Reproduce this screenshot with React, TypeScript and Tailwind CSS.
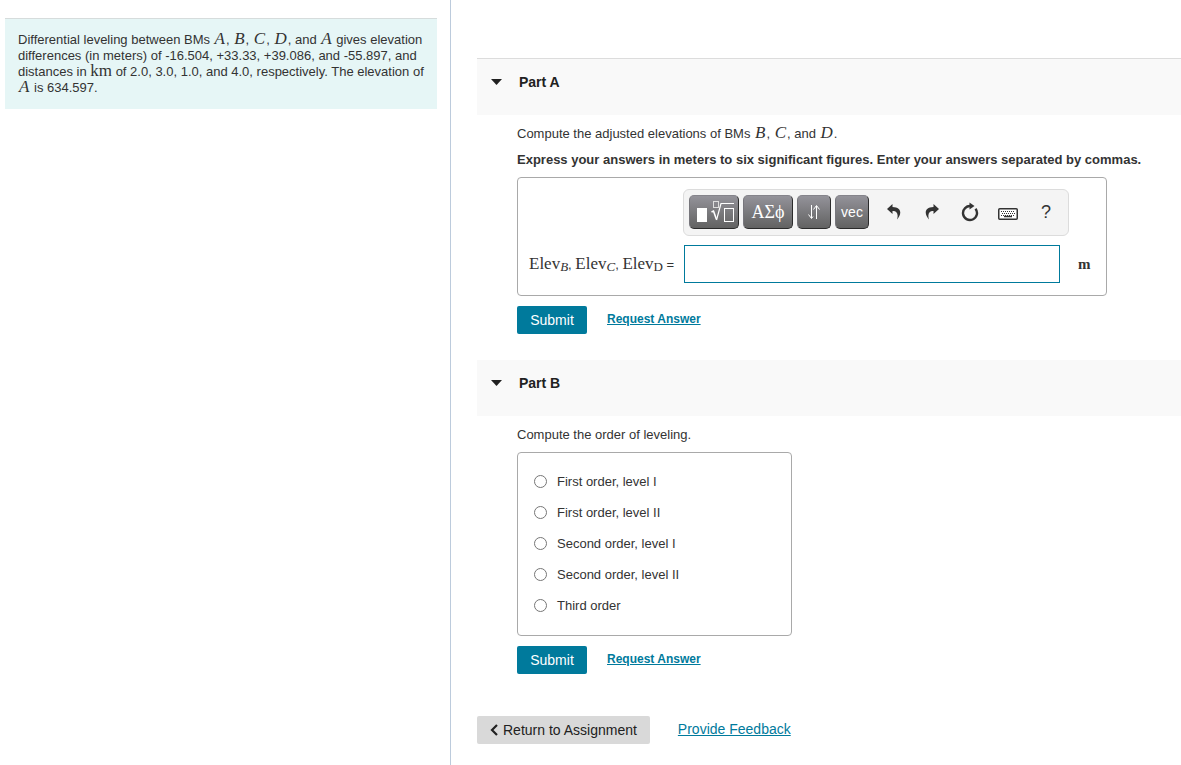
import { useState } from "react";
import type { ReactNode } from "react";

const levels = [
  "First order, level I",
  "First order, level II",
  "Second order, level I",
  "Second order, level II",
  "Third order",
];

function Var({ children }: { children: ReactNode }) {
  return (
    <i className="px-px font-['Liberation_Serif',serif] text-[17px] leading-[0px]">
      {children}
    </i>
  );
}

function Elev({ sub, upright }: { sub: string; upright?: boolean }) {
  return (
    <span className="font-['Liberation_Serif',serif] text-[17px]">
      Elev
      <sub
        className={
          upright
            ? "bottom-[-2px] text-[13px]"
            : "bottom-[-2px] text-[13px] italic"
        }
      >
        {sub}
      </sub>
    </span>
  );
}

function PartHeader({
  title,
  first,
}: {
  title: string;
  first?: boolean;
}) {
  return (
    <button
      type="button"
      className={
        first
          ? "flex h-[57px] w-full items-start border-t border-[#dcdcdc] bg-[#f9f9f9] pt-[14px] pl-[14px] text-left"
          : "flex h-14 w-full items-start bg-[#f9f9f9] pt-[14px] pl-[14px] text-left"
      }
    >
      <svg width="11" height="6" viewBox="0 0 11 6" className="mt-[6px]">
        <path d="M0 0H11L5.5 6Z" fill="#212121" />
      </svg>
      <h2 className="ml-[17px] text-sm leading-[18px] font-bold text-[#212121]">
        {title}
      </h2>
    </button>
  );
}

function Actions() {
  return (
    <div className="mt-[10px] flex items-center gap-5">
      <button
        type="submit"
        className="h-7 w-[70px] rounded-[2px] bg-[#007a9c] text-sm text-white"
      >
        Submit
      </button>
      <a
        href="#answer"
        className="pb-[2px] text-xs leading-4 font-bold text-[#007a9c] underline"
      >
        Request Answer
      </a>
    </div>
  );
}

const darkButton =
  "flex h-[34px] items-center justify-center rounded-[5px] border border-t-[#85848b] border-r-[#2b2b2b] border-b-[#2b2b2b] border-l-[#77767c] bg-linear-to-b from-[#94939a] to-[#626262] text-white";

const iconButton = "flex h-[34px] w-[38px] items-center justify-center";

function Toolbar() {
  return (
    <div className="flex h-[47px] gap-1 rounded-[6px] border border-[#dcdcdc] bg-[#f4f4f4] py-[5px] pr-[3px] pl-[5px]">
      <button type="button" aria-label="Templates" className={`${darkButton} w-[50px]`}>
        <svg width="40" height="24" viewBox="0 0 40 24" fill="none">
          <rect x="3" y="8" width="10" height="14" fill="#fff" />
          <rect x="19.5" y="1.5" width="5" height="6" stroke="#ddd" />
          <path d="M17.5 12L19.5 11L22.5 19.5" stroke="#fff" strokeWidth="1.6" />
          <path d="M22.5 20L27 3.5H40" stroke="#fff" strokeWidth="1.2" />
          <rect x="30.5" y="8.5" width="9" height="13" stroke="#fff" />
        </svg>
      </button>
      <button
        type="button"
        className={`${darkButton} w-[50px] font-['Liberation_Serif',serif] text-lg`}
      >
        ΑΣϕ
      </button>
      <button type="button" aria-label="Arrows" className={`${darkButton} w-[34px]`}>
        <svg width="14" height="16" viewBox="0 0 14 16" fill="none" stroke="#fff">
          <path d="M4.5 1V14M1.5 10.5L4.5 14.5L6 12.5" />
          <path d="M9.5 15V2M6.5 5.5L9.5 1.5L12.5 5.5" />
        </svg>
      </button>
      <button type="button" className={`${darkButton} w-[34px] text-sm`}>
        vec
      </button>
      <div className="ml-[2px] flex">
        <button type="button" aria-label="Undo" className={iconButton}>
          <svg width="14" height="16" viewBox="0 0 14 16">
            <path
              d="M5.5 0L0 5L5.5 10V7C9 6.5 12 9 10 15.5C14.5 11 15.5 3.2 5.5 3Z"
              fill="#333"
            />
          </svg>
        </button>
        <button type="button" aria-label="Redo" className={iconButton}>
          <svg width="14" height="16" viewBox="0 0 14 16">
            <path
              d="M8.5 0L14 5L8.5 10V7C5 6.5 2 9 4 15.5C-0.5 11 -1.5 3.2 8.5 3Z"
              fill="#333"
            />
          </svg>
        </button>
        <button type="button" aria-label="Reset" className={iconButton}>
          <svg width="18" height="20" viewBox="0 0 18 20" fill="none">
            <path
              d="M10 4.1A7 7 0 1 0 14.5 6.7"
              stroke="#333"
              strokeWidth="2.4"
            />
            <path d="M8.5 0.5L13.5 4L8.5 7.5Z" fill="#333" />
          </svg>
        </button>
        <button type="button" aria-label="Keyboard" className={iconButton}>
          <svg width="20" height="12" viewBox="0 0 20 12" fill="none" className="mt-1">
            <rect
              x="0.75"
              y="0.75"
              width="18.5"
              height="10.5"
              rx="1"
              fill="#fff"
              stroke="#333"
              strokeWidth="1.5"
            />
            <path
              d="M3 3.5H17M4 5.5H17M3 7.5H17"
              stroke="#333"
              strokeWidth="1"
              strokeDasharray="1 1"
            />
            <path d="M6 8.5H14" stroke="#333" strokeWidth="1.5" />
          </svg>
        </button>
        <button
          type="button"
          aria-label="Help"
          className={`${iconButton} text-lg text-[#333]`}
        >
          ?
        </button>
      </div>
    </div>
  );
}

export default function App() {
  const [answer, setAnswer] = useState("");
  const [level, setLevel] = useState("");

  return (
    <div className="grid min-h-screen grid-cols-[451fr_730fr] bg-white font-['Liberation_Sans',Arial,sans-serif] text-[13px] leading-4 text-[#333]">

      <aside className="min-w-0 border-r border-[#bccbdc] pt-[18px] pr-[13px] pl-[5px]">
        <p className="border-t border-[#d6dcdc] bg-[#e6f6f6] pt-[13px] pr-2 pb-[13px] pl-[13px]">
          Differential leveling between BMs <Var>A</Var>, <Var>B</Var>,{" "}
          <Var>C</Var>, <Var>D</Var>, and <Var>A</Var> gives elevation
          differences (in meters) of -16.504, +33.33, +39.086, and -55.897, and
          distances in{" "}
          <span className="font-['Liberation_Serif',serif] text-[17px] leading-[0px]">
            km
          </span>{" "}
          of 2.0, 3.0, 1.0, and 4.0, respectively. The elevation of{" "}
          <Var>A</Var> is 634.597.
        </p>
      </aside>

      <main className="min-w-0 pt-[58px] pl-[26px]">

        <section>
          <PartHeader title="Part A" first />

          <form
            className="pt-[11px] pl-10"
            onSubmit={(e) => e.preventDefault()}
          >
            <p>
              Compute the adjusted elevations of BMs <Var>B</Var>, <Var>C</Var>
              , and <Var>D</Var>.
            </p>
            <p className="mt-[10px] font-bold">
              Express your answers in meters to six significant figures. Enter
              your answers separated by commas.
            </p>

            <div className="mt-[9px] w-fit rounded-[4px] border border-[#a9a9a9] pt-[11px] pr-[15px] pb-3 pl-[11px]">
              <div className="flex justify-end pr-[22px]">
                <Toolbar />
              </div>
              <div className="mt-[9px] flex items-center">
                <label htmlFor="elevations" className="w-[155px] whitespace-nowrap">
                  <Elev sub="B" />, <Elev sub="C" />, <Elev sub="D" upright /> =
                </label>
                <input
                  id="elevations"
                  type="text"
                  value={answer}
                  onChange={(e) => setAnswer(e.target.value)}
                  className="h-[38px] w-[376px] border border-[#007a9c] bg-white px-2 text-base outline-none"
                />
                <span className="ml-[18px] w-[13px] font-['Liberation_Serif',serif] text-[15px] font-bold">
                  m
                </span>
              </div>
            </div>

            <Actions />
          </form>
        </section>

        <section className="mt-[26px]">
          <PartHeader title="Part B" />

          <form
            className="pt-[11px] pl-10"
            onSubmit={(e) => e.preventDefault()}
          >
            <p>Compute the order of leveling.</p>

            <fieldset className="mt-[9px] flex w-[275px] flex-col gap-[14px] rounded-[4px] border border-[#a9a9a9] px-4 pt-5 pb-[21px]">
              {levels.map((name) => (
                <label
                  key={name}
                  className="flex items-center gap-[10px] leading-[17px]"
                >
                  <input
                    type="radio"
                    name="level"
                    value={name}
                    checked={level === name}
                    onChange={() => setLevel(name)}
                    className="size-[13px]"
                  />
                  {name}
                </label>
              ))}
            </fieldset>

            <Actions />
          </form>
        </section>

        <div className="mt-[42px] flex items-center gap-7 text-sm">
          <button
            type="button"
            className="flex h-7 items-center gap-[5px] rounded-[2px] bg-[#d9d9d9] px-[13px] text-[#212121]"
          >
            <svg width="8" height="12" viewBox="0 0 8 12" fill="none">
              <path d="M7 1L2 6L7 11" stroke="#212121" strokeWidth="2.2" />
            </svg>
            Return to Assignment
          </button>
          <a href="#feedback" className="pb-[2px] text-[#007a9c] underline">
            Provide Feedback
          </a>
        </div>

      </main>

    </div>
  );
}
